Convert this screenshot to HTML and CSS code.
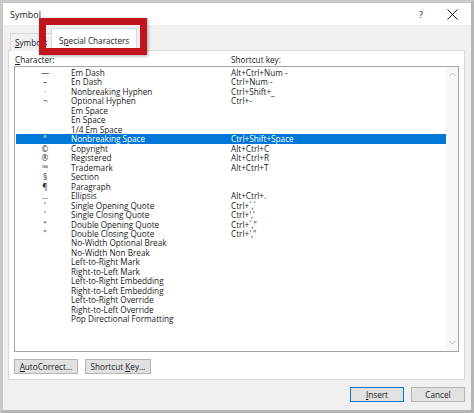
FILE: index.html
```html
<!DOCTYPE html>
<html lang="en">
<head>
<meta charset="UTF-8" />
<title>Symbol</title>
<link rel="stylesheet" href="styles.css">
</head>
<body>
<div class="window">
  <div class="titlebar">
    <span class="title">Symbol</span>
    <span class="help">?</span>
    <svg class="close" width="11" height="11" viewBox="0 0 11 11"><path d="M0.5 0.5L10.5 10.5M10.5 0.5L0.5 10.5" stroke="#222" stroke-width="1"/></svg>
  </div>
  <div class="content">
    <div class="tabs">
      <div class="tab"><u>S</u>ymbols</div>
      <div class="tab active">S<u>p</u>ecial Characters</div>
    </div>
    <div class="panel">
      <div class="heads">
        <span><u>C</u>haracter:</span>
        <span>Shortcut key:</span>
      </div>
      <div class="listbox">
        <div class="rows">
          <div class="row"><span class="ch">—</span><span>Em Dash</span><span>Alt+Ctrl+Num -</span></div>
          <div class="row"><span class="ch">–</span><span>En Dash</span><span>Ctrl+Num -</span></div>
          <div class="row"><span class="ch small">-</span><span>Nonbreaking Hyphen</span><span>Ctrl+Shift+_</span></div>
          <div class="row"><span class="ch">¬</span><span>Optional Hyphen</span><span>Ctrl+-</span></div>
          <div class="row"><span class="ch"></span><span>Em Space</span><span></span></div>
          <div class="row"><span class="ch"></span><span>En Space</span><span></span></div>
          <div class="row"><span class="ch"></span><span>1/4 Em Space</span><span></span></div>
          <div class="row selected"><span class="ch">°</span><span>Nonbreaking Space</span><span>Ctrl+Shift+Space</span></div>
          <div class="row"><span class="ch">©</span><span>Copyright</span><span>Alt+Ctrl+C</span></div>
          <div class="row"><span class="ch">®</span><span>Registered</span><span>Alt+Ctrl+R</span></div>
          <div class="row"><span class="ch">™</span><span>Trademark</span><span>Alt+Ctrl+T</span></div>
          <div class="row"><span class="ch">§</span><span>Section</span><span></span></div>
          <div class="row"><span class="ch">¶</span><span>Paragraph</span><span></span></div>
          <div class="row"><span class="ch">…</span><span>Ellipsis</span><span>Alt+Ctrl+.</span></div>
          <div class="row"><span class="ch">‘</span><span>Single Opening Quote</span><span>Ctrl+`,`</span></div>
          <div class="row"><span class="ch">’</span><span>Single Closing Quote</span><span>Ctrl+','</span></div>
          <div class="row"><span class="ch">“</span><span>Double Opening Quote</span><span>Ctrl+`,"</span></div>
          <div class="row"><span class="ch">”</span><span>Double Closing Quote</span><span>Ctrl+',"</span></div>
          <div class="row"><span class="ch"></span><span>No-Width Optional Break</span><span></span></div>
          <div class="row"><span class="ch"></span><span>No-Width Non Break</span><span></span></div>
          <div class="row"><span class="ch"></span><span>Left-to-Right Mark</span><span></span></div>
          <div class="row"><span class="ch"></span><span>Right-to-Left Mark</span><span></span></div>
          <div class="row"><span class="ch"></span><span>Left-to-Right Embedding</span><span></span></div>
          <div class="row"><span class="ch"></span><span>Right-to-Left Embedding</span><span></span></div>
          <div class="row"><span class="ch"></span><span>Left-to-Right Override</span><span></span></div>
          <div class="row"><span class="ch"></span><span>Right-to-Left Override</span><span></span></div>
          <div class="row"><span class="ch"></span><span>Pop Directional Formatting</span><span></span></div>
        </div>
        <div class="scrollbar">
          <svg width="7" height="5" viewBox="0 0 7 5"><path d="M0.5 4L3.5 1L6.5 4" fill="none" stroke="#b8b8b8" stroke-width="1"/></svg>
          <svg width="7" height="5" viewBox="0 0 7 5"><path d="M0.5 1L3.5 4L6.5 1" fill="none" stroke="#b8b8b8" stroke-width="1"/></svg>
        </div>
      </div>
      <div class="panel-buttons">
        <button class="btn btn-auto"><u>A</u>utoCorrect...</button>
        <button class="btn btn-key">Shortcut <u>K</u>ey...</button>
      </div>
    </div>
    <div class="footer">
      <button class="btn btn-insert default"><u>I</u>nsert</button>
      <button class="btn btn-cancel">Cancel</button>
    </div>
  </div>
  <!-- annotation box drawn over the tab -->
  <div class="callout"></div>
</div>
</body>
</html>
```

FILE: styles.css
```css
body {
  margin: 0;
  padding: 0;
  background: #c8c8c8;
  font-family: "Open Sans", "Noto Sans", sans-serif;
  font-size: 8.2px;
  color: #1a1a1a;
}
u { text-decoration: underline; text-underline-offset: 1px; }

.window {
  position: relative;
  width: 474px;
  height: 413px;
  box-sizing: border-box;
  border: 3px solid #c9c9c9;
  border-right-color: #b4b4b4;
  border-bottom-color: #b4b4b4;
  background: #f0f0f0;
  display: flex;
  flex-direction: column;
}

.titlebar {
  height: 22px;
  flex: none;
  background: #fff;
  display: flex;
  align-items: center;
  padding-left: 7px;
  padding-right: 13px;
}
.title { font-size: 9px; flex: 1; }
.help { font-size: 9px; margin-right: 24px; }
.close { display: block; }

.content {
  flex: 1;
  padding: 4px 6px 0 5px;
  display: flex;
  flex-direction: column;
}

.tabs {
  display: flex;
  align-items: flex-end;
  height: 22px;
  margin-bottom: -1px;
  padding-left: 2px;
  position: relative;
  z-index: 1;
}
.tab {
  height: 18px;
  box-sizing: border-box;
  border: 1px solid #d9d9d9;
  border-bottom: none;
  background: #f0f0f0;
  padding: 0 4px;
  display: flex;
  align-items: center;
}
.tab.active {
  height: 23px;
  background: #fff;
  padding: 0 7px;
  margin-left: -1px;
}

.panel {
  background: #fff;
  border: 1px solid #d9d9d9;
  height: 330px;
  box-sizing: border-box;
  padding: 0 5px;
  display: flex;
  flex-direction: column;
}

.heads {
  height: 15px;
  flex: none;
  display: grid;
  grid-template-columns: 216px 1fr;
  align-items: center;
  padding-left: 1px;
  padding-top: 1px;
  box-sizing: border-box;
}

.listbox {
  height: 286px;
  flex: none;
  box-sizing: border-box;
  border: 1px solid #a5a5a5;
  display: flex;
}
.rows {
  flex: 1;
  padding: 1px 0 0 1px;
  display: grid;
  grid-auto-rows: 9.47px;
  align-content: start;
}
.row {
  display: grid;
  grid-template-columns: 55px 160px 1fr;
  align-items: center;
  line-height: 9.47px;
  white-space: nowrap;
}
.row .ch { text-align: center; padding-left: 3px; color: #333; }
.row .ch.small { font-size: 6px; }
.row.selected { background: #0078d7; color: #fff; }
.row.selected .ch { color: #fff; }

.scrollbar {
  width: 12px;
  background: #f7f7f7;
  display: flex;
  flex-direction: column;
  justify-content: space-between;
  align-items: center;
  padding: 5px 0 6px;
}
.scrollbar svg { display: block; }

.panel-buttons {
  display: flex;
  gap: 7px;
  margin-top: 7px;
}

.btn {
  height: 15px;
  box-sizing: border-box;
  border: 1px solid #b4b4b4;
  background: #e1e1e1;
  font-family: inherit;
  font-size: 8.2px;
  color: #1a1a1a;
  padding: 0;
  line-height: 13px;
}
.btn-auto { width: 64px; }
.btn-key { width: 66px; }
.btn-insert, .btn-cancel { width: 54px; }
.btn.default { border-color: #0078d7; }

.footer {
  display: flex;
  justify-content: flex-end;
  gap: 7px;
  margin-top: 7px;
}

.callout {
  position: absolute;
  z-index: 2;
  left: 36px;
  top: 15px;
  width: 108px;
  height: 37px;
  box-sizing: border-box;
  border: 7px solid #c1141c;
  box-shadow: 1px 1px 3px rgba(0, 0, 0, 0.35);
}
```
